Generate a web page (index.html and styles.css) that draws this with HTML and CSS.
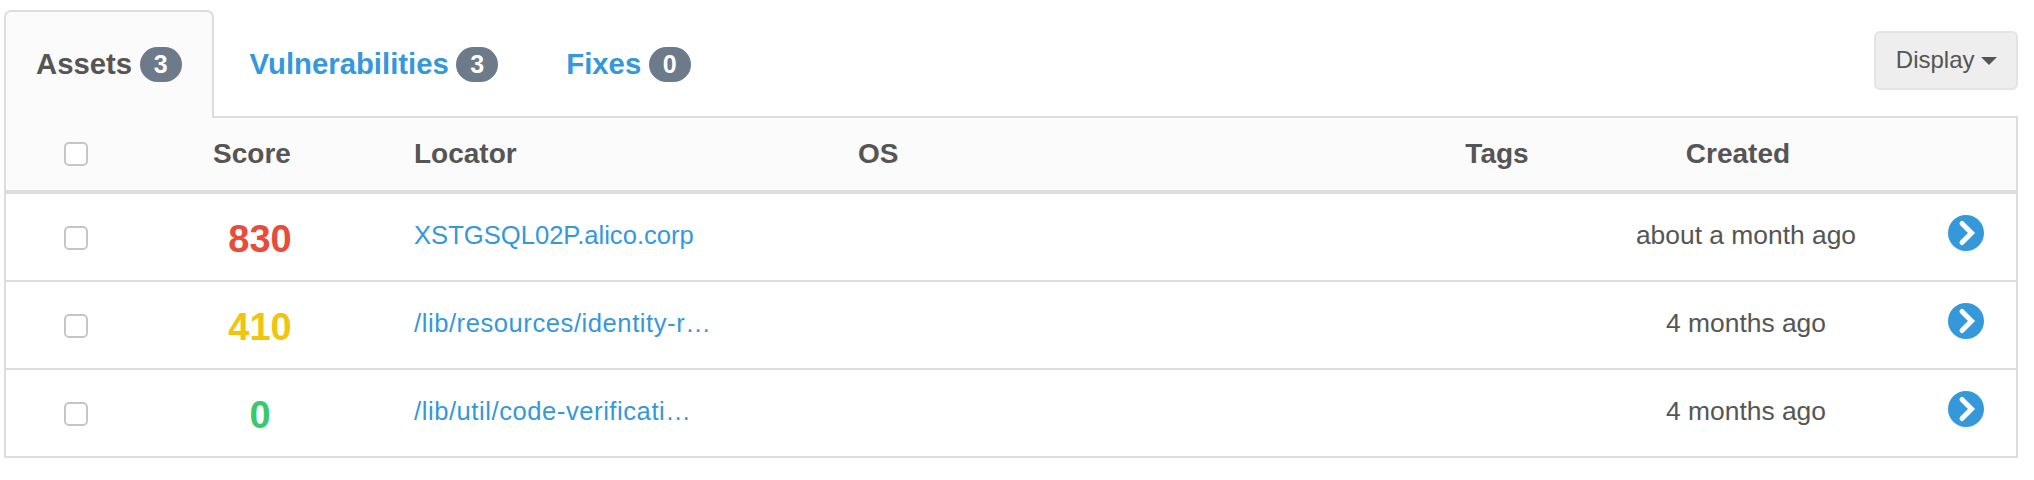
FILE: index.html
```html
<!DOCTYPE html>
<html lang="en">
<head>
    <meta charset="UTF-8">
    <title>Assets</title>
    <link rel="stylesheet" href="styles.css">
</head>
<body>
    <div class="panel">
        <!-- tabs and display menu -->
        <div class="tabBar">
            <a class="tab active" href="#">Assets <span class="badge">3</span></a>
            <a class="tab" href="#">Vulnerabilities <span class="badge">3</span></a>
            <a class="tab" href="#">Fixes <span class="badge">0</span></a>
            <button class="displayButton">Display <span class="caret"></span></button>
        </div>

        <table class="assetTable">
            <colgroup>
                <col class="colCheck">
                <col class="colScore">
                <col class="colLocator">
                <col class="colOs">
                <col class="colTags">
                <col class="colCreated">
                <col class="colAction">
            </colgroup>
            <thead>
                <tr>
                    <th class="checkCell"><input type="checkbox"></th>
                    <th class="scoreCell">Score</th>
                    <th class="locatorCell">Locator</th>
                    <th>OS</th>
                    <th class="tagsCell">Tags</th>
                    <th class="createdHead">Created</th>
                    <th></th>
                </tr>
            </thead>
            <tbody>
                <tr>
                    <td class="checkCell"><input type="checkbox"></td>
                    <td class="scoreCell score high">830</td>
                    <td class="locatorCell"><a href="#">XSTGSQL02P.alico.corp</a></td>
                    <td></td>
                    <td></td>
                    <td class="createdCell">about a month ago</td>
                    <td class="actionCell">
                        <svg class="goIcon" viewBox="0 0 36 36"><circle cx="18" cy="18" r="18"/><polyline points="14,8.500 23.500,18 14,27.500"/></svg>
                    </td>
                </tr>
                <tr>
                    <td class="checkCell"><input type="checkbox"></td>
                    <td class="scoreCell score medium">410</td>
                    <td class="locatorCell"><a class="pathLink" href="#">/lib/resources/identity-r…</a></td>
                    <td></td>
                    <td></td>
                    <td class="createdCell">4 months ago</td>
                    <td class="actionCell">
                        <svg class="goIcon" viewBox="0 0 36 36"><circle cx="18" cy="18" r="18"/><polyline points="14,8.500 23.500,18 14,27.500"/></svg>
                    </td>
                </tr>
                <tr>
                    <td class="checkCell"><input type="checkbox"></td>
                    <td class="scoreCell score low">0</td>
                    <td class="locatorCell"><a class="pathLink" href="#">/lib/util/code-verificati…</a></td>
                    <td></td>
                    <td></td>
                    <td class="createdCell">4 months ago</td>
                    <td class="actionCell">
                        <svg class="goIcon" viewBox="0 0 36 36"><circle cx="18" cy="18" r="18"/><polyline points="14,8.500 23.500,18 14,27.500"/></svg>
                    </td>
                </tr>
            </tbody>
        </table>
    </div>
</body>
</html>
```

FILE: styles.css
```css
body {
    font-family: "Liberation Sans", Arial, sans-serif;
    margin: 0;
    background-color: #fff;
    color: #555;
}

.panel {
    width: 2014px;
    margin-left: 4px;
    padding-top: 10px;
}

.tabBar {
    display: flex;
    align-items: flex-start;
    gap: 4px;
    height: 106px;
}

.tab {
    display: flex;
    align-items: center;
    gap: 7.500px;
    height: 106px;
    box-sizing: border-box;
    padding: 0 30px;
    border: 2px solid transparent;
    border-bottom: none;
    border-radius: 7px 7px 0 0;
    font-size: 29.3px;
    font-weight: bold;
    color: #3498db;
    text-decoration: none;
    white-space: nowrap;
}

.tab.active {
    height: 108px;
    padding-bottom: 2px;
    background-color: #fbfbfb;
    border-color: #ddd;
    color: #555;
    position: relative;
}

.badge {
    display: inline-block;
    width: 42px;
    height: 35px;
    line-height: 35px;
    border-radius: 18px;
    background-color: #6c7a89;
    color: #fff;
    font-size: 25px;
    text-align: center;
}

.displayButton {
    margin: 21px 0 0 auto;
    width: 144px;
    height: 59px;
    background-color: #eee;
    border: 2px solid #e4e4e4;
    border-radius: 6px;
    font-family: inherit;
    font-size: 24px;
    color: #555;
    padding: 0 0 2px 1px;
}

.caret {
    display: inline-block;
    margin-left: 0;
    vertical-align: middle;
    border-top: 8px solid #555;
    border-left: 8px solid transparent;
    border-right: 8px solid transparent;
}

.assetTable {
    width: 100%;
    table-layout: fixed;
    border-collapse: separate;
    border-spacing: 0;
    border: 2px solid #ddd;
}

.colCheck { width: 140px; }
.colScore { width: 212px; }
.colLocator { width: 484px; }
.colOs { width: 508px; }
.colTags { width: 278px; }
.colCreated { width: 236px; }

th {
    box-sizing: border-box;
    height: 76px;
    padding: 0 0 0 16px;
    background-color: #fbfbfb;
    border-bottom: 4px solid #ddd;
    font-size: 28px;
    text-align: left;
}

td {
    box-sizing: border-box;
    height: 88px;
    padding: 0;
    border-bottom: 2px solid #ddd;
    font-size: 26.4px;
}

tbody tr:last-child td {
    height: 86px;
    border-bottom: none;
}

th.checkCell {
    padding: 0;
}

td.checkCell {
    padding-top: 2px;
}

th.scoreCell {
    padding: 0;
    text-align: center;
}

td.scoreCell {
    padding: 4px 0 0 16px;
    text-align: center;
}

th.locatorCell {
    padding: 0 0 0 56px;
}

td.locatorCell {
    padding: 0 0 3px 56px;
}

th.tagsCell {
    padding: 0 0 0 16px;
    text-align: center;
}

th.createdHead {
    padding: 0 16px 0 0;
    text-align: center;
}

.createdCell {
    padding-bottom: 3px;
    text-align: center;
    white-space: nowrap;
}

.actionCell {
    padding: 0 32px 8px 0;
    text-align: right;
}

input[type="checkbox"] {
    appearance: none;
    display: block;
    box-sizing: border-box;
    width: 24px;
    height: 24px;
    margin: 0 auto;
    background-color: #fff;
    border: 2px solid #c6c6c6;
    border-radius: 5px;
}

.score {
    font-size: 38px;
    font-weight: bold;
}

.high { color: #e74c3c; }
.medium { color: #f1c40f; }
.low { color: #38c96f; }

.locatorCell a {
    color: #3498db;
    text-decoration: none;
    font-size: 25.6px;
}

.locatorCell a.pathLink {
    letter-spacing: 0.55px;
}

.goIcon {
    display: inline-block;
    width: 36px;
    height: 36px;
    vertical-align: middle;
}

.goIcon circle {
    fill: #3498db;
}

.goIcon polyline {
    fill: none;
    stroke: #fff;
    stroke-width: 5;
    stroke-linecap: round;
    stroke-linejoin: miter;
}
```
